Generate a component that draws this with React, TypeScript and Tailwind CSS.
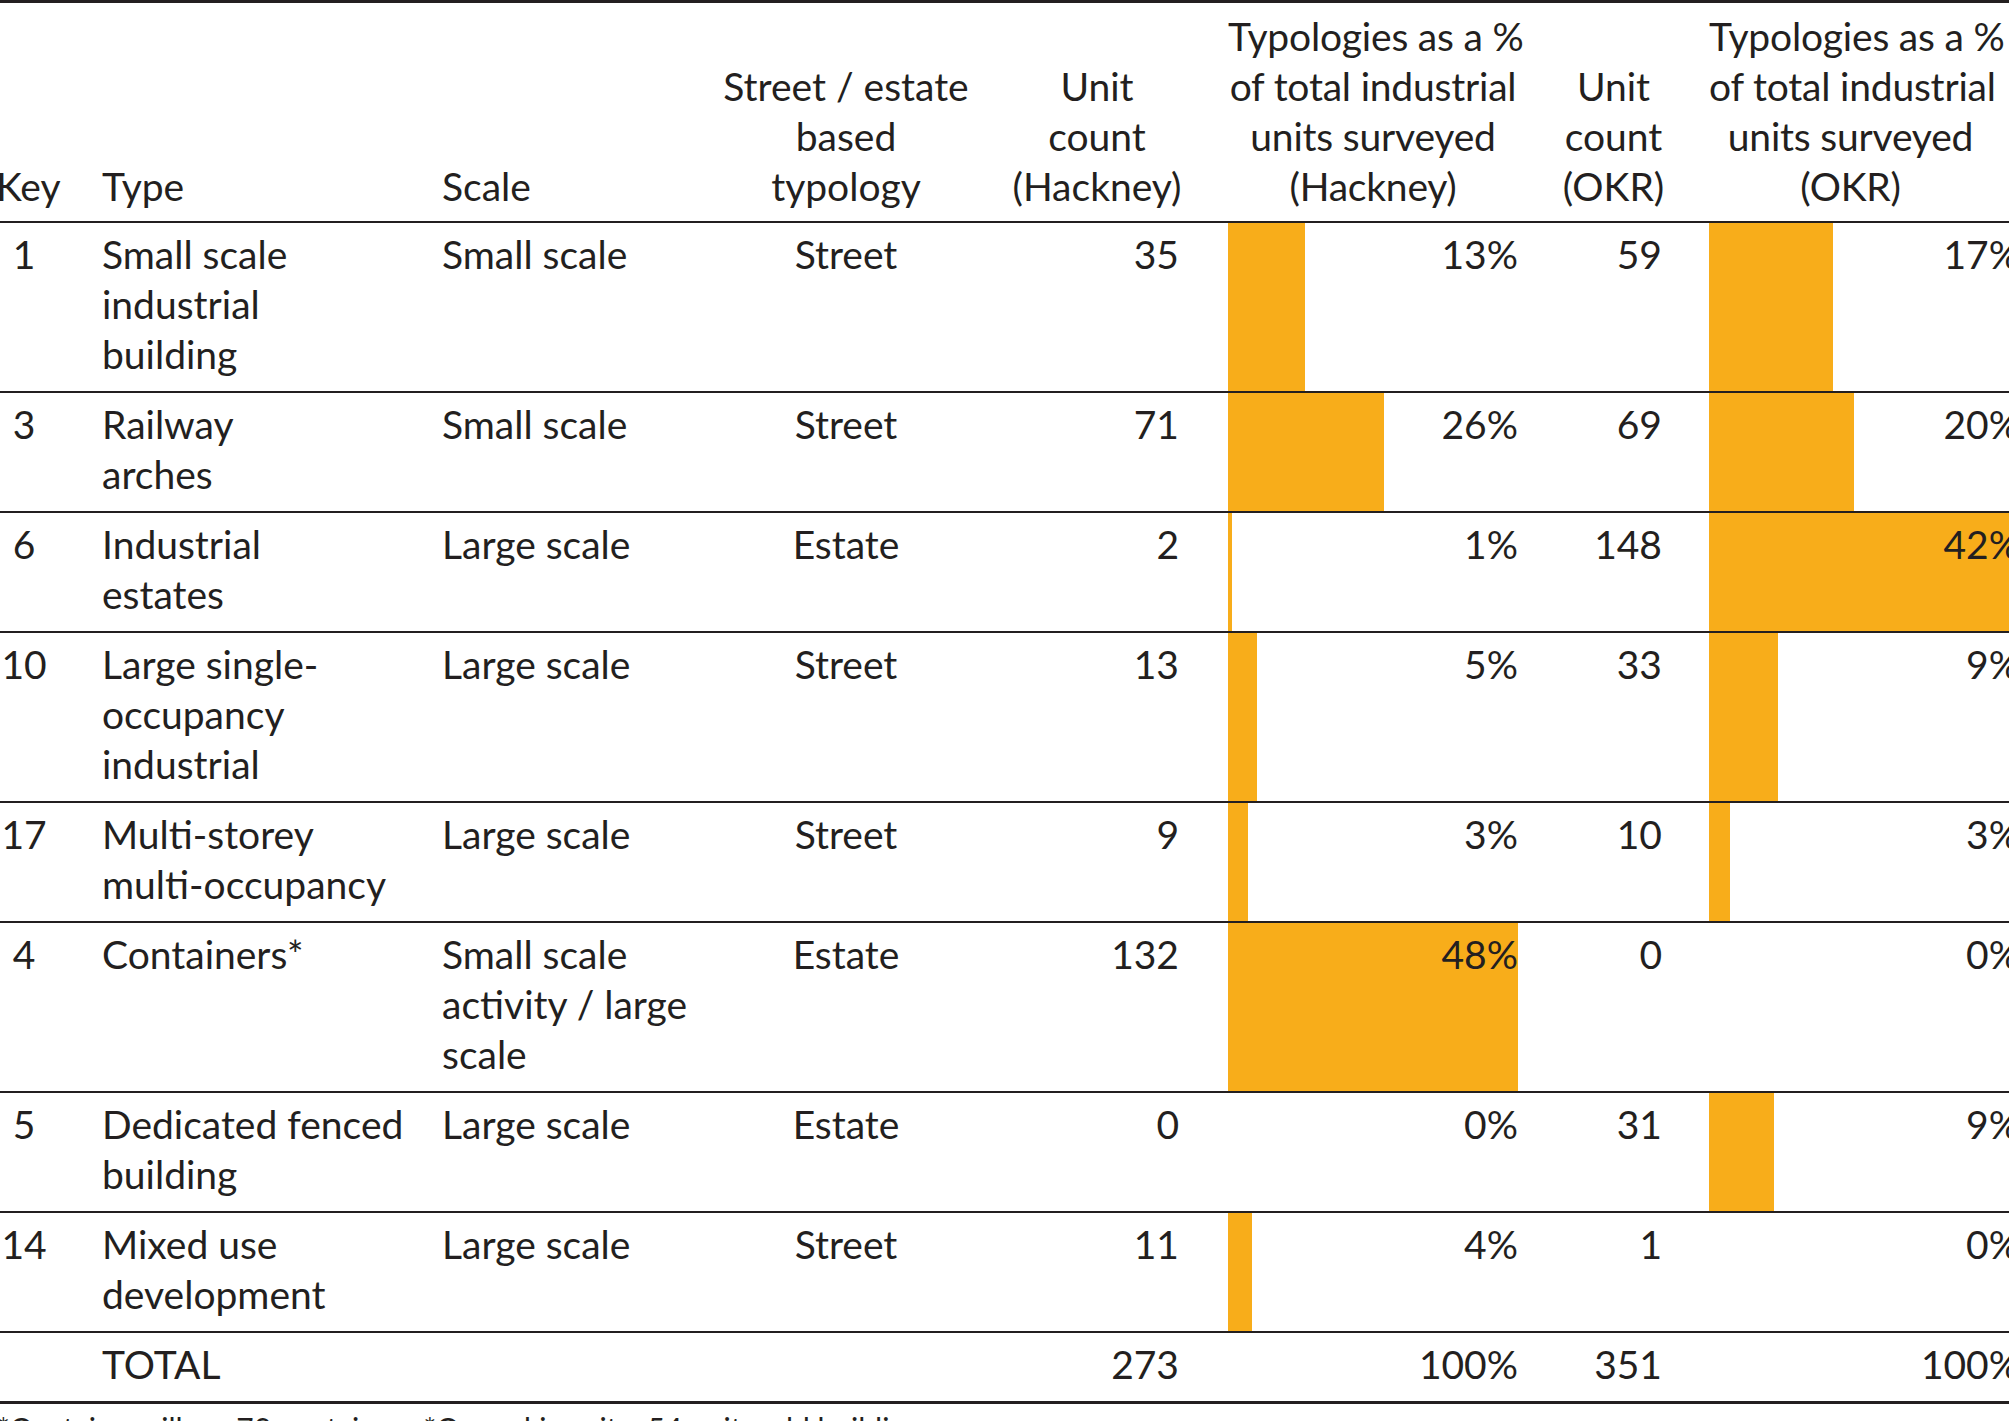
import React from "react";

type Row = {
  key: string;
  type: string[];
  scale: string[];
  street: string;
  hackney: number;
  hackneyPct: string;
  okr: number;
  okrPct: string;
};

const ROWS: Row[] = [
  { key: "1", type: ["Small scale", "industrial", "building"], scale: ["Small scale"], street: "Street", hackney: 35, hackneyPct: "13%", okr: 59, okrPct: "17%" },
  { key: "3", type: ["Railway", "arches"], scale: ["Small scale"], street: "Street", hackney: 71, hackneyPct: "26%", okr: 69, okrPct: "20%" },
  { key: "6", type: ["Industrial", "estates"], scale: ["Large scale"], street: "Estate", hackney: 2, hackneyPct: "1%", okr: 148, okrPct: "42%" },
  { key: "10", type: ["Large single-", "occupancy", "industrial"], scale: ["Large scale"], street: "Street", hackney: 13, hackneyPct: "5%", okr: 33, okrPct: "9%" },
  { key: "17", type: ["Multi-storey", "multi-occupancy"], scale: ["Large scale"], street: "Street", hackney: 9, hackneyPct: "3%", okr: 10, okrPct: "3%" },
  { key: "4", type: ["Containers*"], scale: ["Small scale", "activity / large", "scale"], street: "Estate", hackney: 132, hackneyPct: "48%", okr: 0, okrPct: "0%" },
  { key: "5", type: ["Dedicated fenced", "building"], scale: ["Large scale"], street: "Estate", hackney: 0, hackneyPct: "0%", okr: 31, okrPct: "9%" },
  { key: "14", type: ["Mixed use", "development"], scale: ["Large scale"], street: "Street", hackney: 11, hackneyPct: "4%", okr: 1, okrPct: "0%" },
];

const HACKNEY_MAX = 132;
const OKR_MAX = 148;

const grid =
  "grid grid-cols-[88px_354px_298px_252px_256px_290px_191px_311px]";
const cell = "pt-[6px] pb-[12px]";
const head = "flex flex-col justify-end pt-[8px] pb-[10px]";

function Lines({ lines }: { lines: string[] }) {
  return (
    <>
      {lines.map((l) => (
        <span key={l} className="block whitespace-nowrap">
          {l}
        </span>
      ))}
    </>
  );
}

// data bar behind the percentage, scaled to the column's largest count
function BarCell({ value, max, pct }: { value: number; max: number; pct: string }) {
  const share = value / max;
  return (
    <div className={`relative ${cell}`}>
      {share > 0.01 && (
        <div
          className="absolute inset-y-0 left-0 bg-[#f8ad1a]"
          style={{ width: `${share * 100}%` }}
        />
      )}
      <div className="relative text-right">{pct}</div>
    </div>
  );
}

export default function App() {
  return (
    <div className="w-[2009px] h-[1421px] overflow-hidden bg-white text-[#231f20] font-['Lato','Open_Sans',sans-serif] text-[39px] leading-[50px]">
      <div className="ml-[-20px] w-[2040px]">
        <div className={`${grid} border-t-[3px] border-b-2 border-[#231f20]`}>
          <div className={`${head} pl-[16px]`}>Key</div>
          <div className={`${head} pl-[34px]`}>Type</div>
          <div className={`${head} pl-[20px]`}>Scale</div>
          <div className={`${head} text-center`}>
            <Lines lines={["Street / estate", "based", "typology"]} />
          </div>
          <div className={`${head} text-center pr-[6px]`}>
            <Lines lines={["Unit", "count", "(Hackney)"]} />
          </div>
          <div className={`${head} text-center tracking-[-0.2px]`}>
            <Lines lines={["Typologies as a %", "of total industrial", "units surveyed", "(Hackney)"]} />
          </div>
          <div className={`${head} text-center`}>
            <Lines lines={["Unit", "count", "(OKR)"]} />
          </div>
          <div className={`${head} text-center pr-[28px] tracking-[-0.2px]`}>
            <Lines lines={["Typologies as a %", "of total industrial", "units surveyed", "(OKR)"]} />
          </div>
        </div>

        {ROWS.map((r) => (
          <div key={r.key} className={`${grid} border-b-2 border-[#231f20]`}>
            <div className={`${cell} text-center`}>{r.key}</div>
            <div className={`${cell} pl-[34px]`}>
              <Lines lines={r.type} />
            </div>
            <div className={`${cell} pl-[20px]`}>
              <Lines lines={r.scale} />
            </div>
            <div className={`${cell} text-center`}>{r.street}</div>
            <div className={`${cell} text-right pr-[49px]`}>{r.hackney}</div>
            <BarCell value={r.hackney} max={HACKNEY_MAX} pct={r.hackneyPct} />
            <div className={`${cell} text-right pr-[47px]`}>{r.okr}</div>
            <BarCell value={r.okr} max={OKR_MAX} pct={r.okrPct} />
          </div>
        ))}

        <div className={`${grid} border-b-[3px] border-[#231f20]`}>
          <div className={cell} />
          <div className={`${cell} pl-[34px]`}>TOTAL</div>
          <div className={cell} />
          <div className={cell} />
          <div className={`${cell} text-right pr-[49px]`}>273</div>
          <div className={`${cell} text-right`}>100%</div>
          <div className={`${cell} text-right pr-[47px]`}>351</div>
          <div className={`${cell} text-right`}>100%</div>
        </div>

        <p className="mt-[4px] pl-[17px] text-[30px] leading-[40px] whitespace-nowrap">
          *Container village 73 containers *Coworking site, 54 units, old building
        </p>
      </div>
    </div>
  );
}
